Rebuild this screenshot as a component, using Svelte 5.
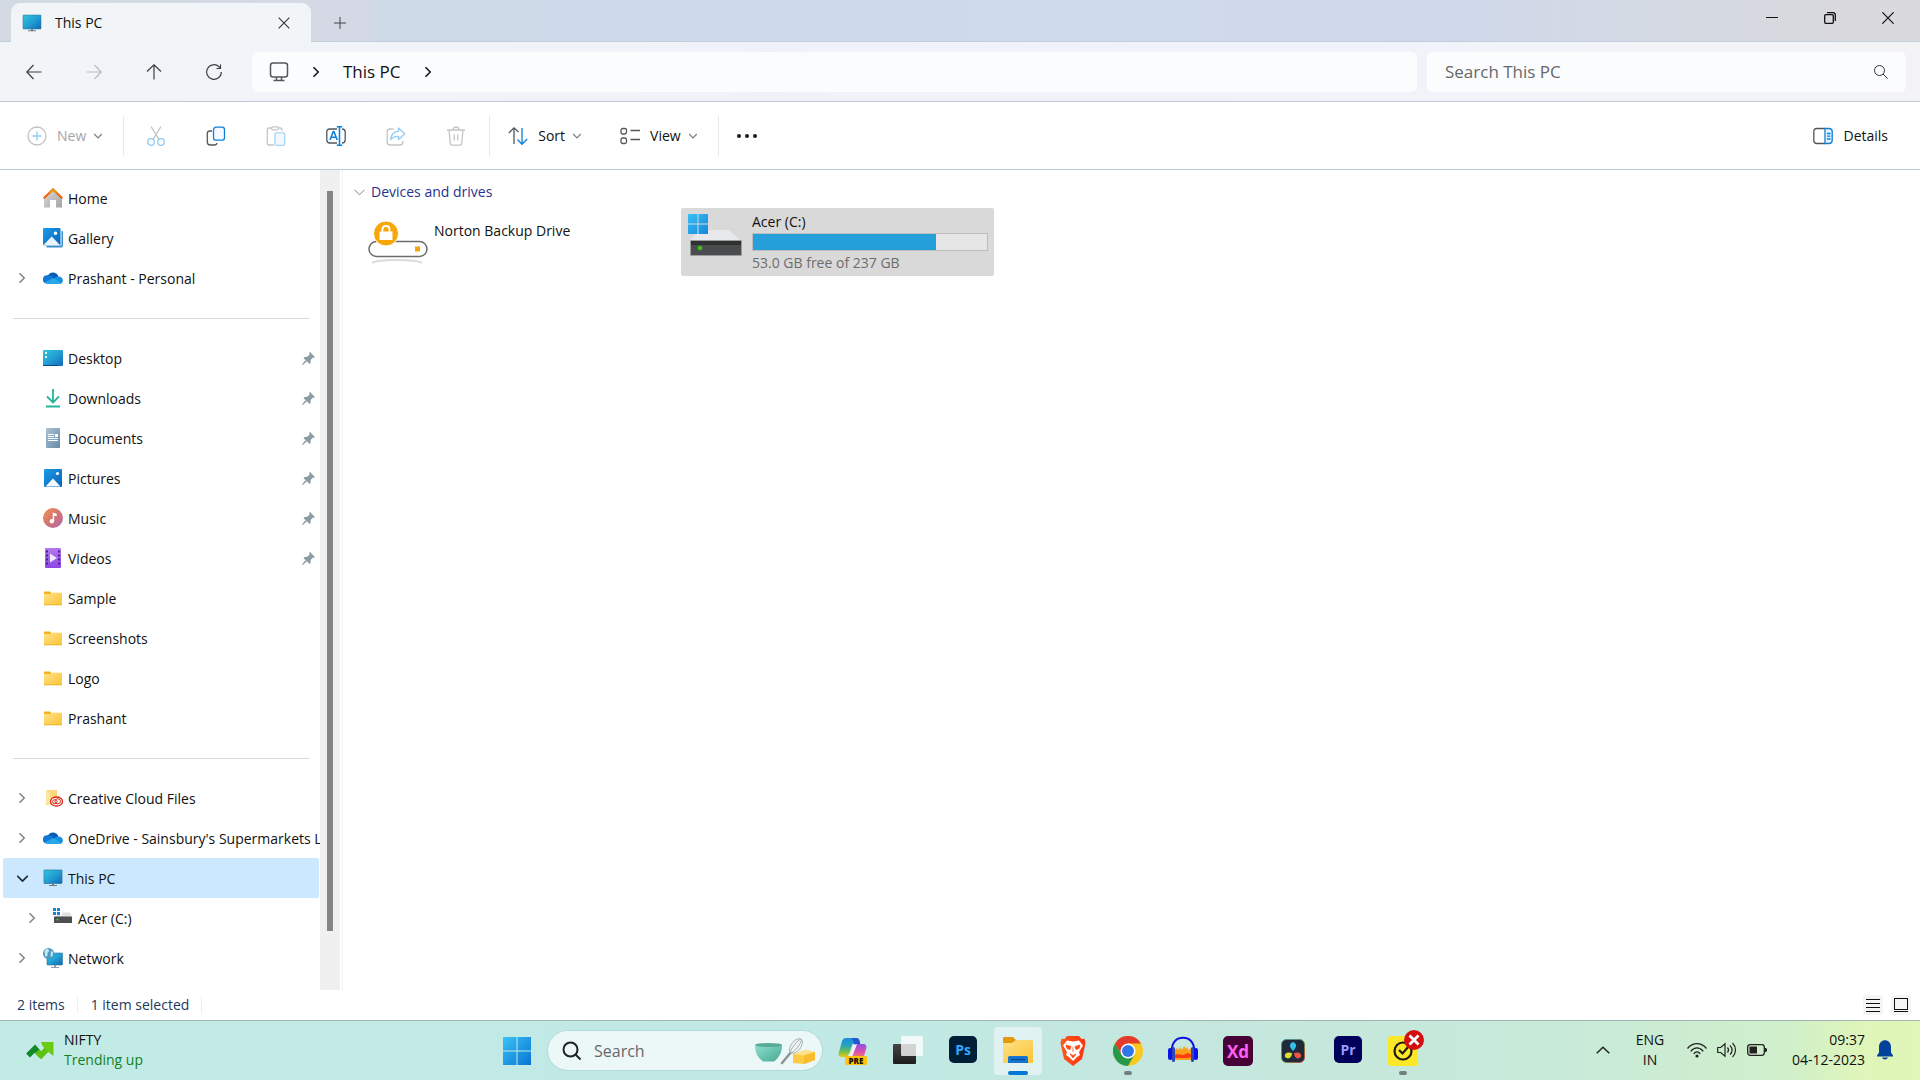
<script>
	const favourites = [
		{ label: 'Home', icon: 'home' },
		{ label: 'Gallery', icon: 'gallery' },
		{ label: 'Prashant - Personal', icon: 'onedrive', chevron: 'right' }
	];

	const pinned = [
		{ label: 'Desktop', icon: 'desktop', pin: true },
		{ label: 'Downloads', icon: 'downloads', pin: true },
		{ label: 'Documents', icon: 'documents', pin: true },
		{ label: 'Pictures', icon: 'pictures', pin: true },
		{ label: 'Music', icon: 'music', pin: true },
		{ label: 'Videos', icon: 'videos', pin: true },
		{ label: 'Sample', icon: 'folder' },
		{ label: 'Screenshots', icon: 'folder' },
		{ label: 'Logo', icon: 'folder' },
		{ label: 'Prashant', icon: 'folder' }
	];

	const locations = [
		{ label: 'Creative Cloud Files', icon: 'creative', chevron: 'right' },
		{ label: "OneDrive - Sainsbury's Supermarkets L", icon: 'onedrive', chevron: 'right' },
		{ label: 'This PC', icon: 'pc', chevron: 'down', selected: true },
		{ label: 'Acer (C:)', icon: 'drive', chevron: 'right', nested: true },
		{ label: 'Network', icon: 'network', chevron: 'right' }
	];

	const groups = [favourites, pinned, locations];

	const fileActions = [
		{ label: 'Cut', icon: 'cut' },
		{ label: 'Copy', icon: 'copy' },
		{ label: 'Paste', icon: 'paste' },
		{ label: 'Rename', icon: 'rename' },
		{ label: 'Share', icon: 'share' },
		{ label: 'Delete', icon: 'delete' }
	];

	const apps = [
		{ label: 'Copilot', icon: 'copilot' },
		{ label: 'Task view', icon: 'taskview' },
		{ label: 'Photoshop', icon: 'photoshop' },
		{ label: 'File Explorer', icon: 'explorer', state: 'active' },
		{ label: 'Brave', icon: 'brave' },
		{ label: 'Chrome', icon: 'chrome', state: 'running' },
		{ label: 'Audacity', icon: 'audacity' },
		{ label: 'Adobe XD', icon: 'xd' },
		{ label: 'DaVinci Resolve', icon: 'resolve' },
		{ label: 'Premiere Pro', icon: 'premiere' },
		{ label: 'Norton', icon: 'norton', state: 'running' }
	];

	const drive = { name: 'Acer (C:)', free: '53.0 GB', total: '237 GB', used: 78 };

	let search = $state('');
	let taskSearch = $state('');
</script>

{#snippet chevron(dir, size = 8)}
	<svg class="chevron {dir}" width={size} height={size} viewBox="0 0 8 8" fill="none" stroke="currentColor" stroke-width="1.2">
		<path d="M2 0.2 5.8 4 2 7.8" />
	</svg>
{/snippet}

<!-- 20px icons of the navigation tree -->
{#snippet treeIcon(name)}
	<svg class="tree-icon" width="20" height="20" viewBox="0 0 20 20">
		{#if name === 'home'}
			<path d="M1 9 10 1.500 19 9v10.500h-6V12H7v7.500H1z" fill="url(#grey)" />
			<path d="M.6 10.400 10 1.500l9.400 8.900" fill="none" stroke="#f2640f" stroke-width="2" />
			<path d="M6.600 4.700 10 1.500l3.400 3.200" fill="none" stroke="#e99a0c" stroke-width="2" />
		{:else if name === 'gallery'}
			<path d="M3 17.500h16.500v2H4zM18.500 2.500l1.500 1V18h-1.500z" fill="#3b8fca" />
			<rect width="17.500" height="17.500" rx="1" fill="url(#blue)" />
			<path d="m0 17.500 8.700-9 8.800 9z" fill="#e8f5ff" />
			<circle cx="12.500" cy="5.300" r="1.700" fill="#fff" />
		{:else if name === 'onedrive'}
			<path d="M5 7.500a5.600 5.600 0 0 1 10.400 1L12 12 4 10z" fill="#0a5cb5" />
			<path d="M4.200 7.300c2-.6 4 .2 6 1.700l-2 4-5.400 2.500A4.200 4.200 0 0 1 4.200 7.300z" fill="#0f78d4" />
			<path d="M15.200 8.500c6 .1 6.300 7.200 1 7.500l-6-4.500c1.300-2 3-3 5-3z" fill="#1690e0" />
			<path d="M1.800 14.600 10.300 10l8.300 5c-1 1-1.800 1-2.600 1H4.300c-1.200 0-2-.6-2.500-1.400z" fill="#28a8ea" />
		{:else if name === 'desktop'}
			<rect y="2" width="20" height="16" rx="1" fill="url(#screen)" />
			<path d="M2 4h2v2H2zM2 8h2v2H2z" fill="#e8fbff" />
			<path d="M0 17h15v1H0z" fill="#0c4a86" />
		{:else if name === 'downloads'}
			<path d="M10 1v13M4 8.500l6 6 6-6M3 18.500h14" fill="none" stroke="#24b39b" stroke-width="1.800" />
		{:else if name === 'documents'}
			<rect x="3" width="14" height="20" rx="1" fill="url(#paper)" />
			<path d="M5 6.500h6M5 8.500h6M5 10.500h10M5 12.500h10" stroke="#fff" stroke-width="1" />
			<rect x="12" y="6" width="3" height="3" fill="#fff" />
		{:else if name === 'pictures'}
			<rect x="1" y="1" width="18" height="18" rx="1" fill="url(#blue)" />
			<path d="m2.500 18.500 7.500-8 7.500 8z" fill="#f5faff" />
			<circle cx="14.500" cy="5.500" r="1.600" fill="#fff" />
		{:else if name === 'music'}
			<circle cx="10" cy="10" r="10" fill="url(#music)" />
			<circle cx="8.800" cy="13.200" r="2.200" fill="#fff" />
			<path d="M9.700 13V4.500l4 1.200v2.600l-2.500-.6V13z" fill="#fff" />
		{:else if name === 'videos'}
			<rect x="2" width="16" height="20" rx="1" fill="url(#violet)" />
			<path d="M4 2.500v16M16 2.500v16" stroke="#47218c" stroke-width="2" stroke-dasharray="2 2" />
			<path d="m7 5.500 7 4.500-7 4.500z" fill="#f0e8ff" />
		{:else if name === 'folder'}
			<path d="M1 3.500h6l1.500 1.500v3H1z" fill="#f5b01e" />
			<path d="M1 6h6l1.500-1.300H19V17H1z" fill="url(#folder)" />
			<path d="M1 16.300h18v1H1z" fill="#eeb22b" />
		{:else if name === 'creative'}
			<path d="M3 2h11v14l-11 1z" fill="#fbd879" />
			<path d="m3 2 4 2v13l-4-1.500z" fill="#fce6a4" />
			<ellipse cx="13.500" cy="13.500" rx="6" ry="4.500" fill="#fff" stroke="#db2a1c" stroke-width="1.300" />
			<ellipse cx="11.800" cy="13.700" rx="2.300" ry="2" fill="none" stroke="#db2a1c" />
			<ellipse cx="14.700" cy="13.300" rx="2.800" ry="2.500" fill="none" stroke="#db2a1c" />
		{:else if name === 'pc'}
			<rect x="1" y="2" width="18" height="13.500" rx=".5" fill="url(#screen)" stroke="#28769b" stroke-width=".7" />
			<path d="M9 15.500h2v1.500h3v1H6v-1h3z" fill="#6f7c86" />
		{:else if name === 'drive'}
			<path d="M9 4.500h8l2 4.500H2l2-1.500h5z" fill="#dfe1e3" />
			<path d="M0 0h3v3H0zM4 0h3v3H4zM0 4h3v3H0zM4 4h3v3H4z" fill="#1483d8" />
			<rect x="1" y="8.500" width="18" height="6.500" rx=".5" fill="#4d5052" />
			<circle cx="4.500" cy="11.500" r=".9" fill="#4bd530" />
		{:else if name === 'network'}
			<rect x="4" y="5" width="15.500" height="12" rx=".5" fill="url(#screen)" stroke="#28769b" stroke-width=".6" />
			<path d="M11 17h2v2h3v1H8v-1h3z" fill="#929ea6" />
			<circle cx="5.500" cy="5.500" r="5.500" fill="#4b9ac1" />
			<path d="M1.500 3c2-3 4-2 4.500-.5S4 4 4.500 6 3 9 2.200 8.500zM8 3l2 1-.5 4L7.500 9z" fill="#cde7f1" />
		{/if}
	</svg>
{/snippet}

{#snippet actionIcon(name)}
	<svg width="20" height="20" viewBox="0 0 20 20" fill="none" stroke-width="1.300" stroke="#54575a">
		{#if name === 'new'}
			<circle cx="10" cy="10" r="9" stroke="#bfc1c4" />
			<path d="M10 5.500v9M5.500 10h9" stroke="#91cdf3" />
		{:else if name === 'cut'}
			<path d="m5 .5 8 13M15 .5 7 13.500" stroke="#bfc1c4" />
			<circle cx="5" cy="16" r="3.300" stroke="#91cdf3" />
			<circle cx="15" cy="16" r="3.300" stroke="#91cdf3" />
		{:else if name === 'copy'}
			<path d="M6 5H4C2 5 1.300 6 1.300 7.500V16c0 2 1 3 3 3h4c1.500 0 2.500-.7 2.700-2" />
			<rect x="7.500" y="1.200" width="11" height="13" rx="2.500" fill="#f4faff" stroke="#0f80d7" />
		{:else if name === 'paste'}
			<path d="M5.500 2H3C2 2 1.300 2.700 1.300 4v13c0 1.300.7 2 1.700 2h5M12.500 2H14c1.300 0 2 .7 2 2v1" stroke="#c3c5c7" />
			<rect x="5.500" y=".8" width="7" height="3" rx="1.500" stroke="#c3c5c7" />
			<rect x="9" y="6.800" width="9.700" height="12.500" rx="1.500" fill="#f3faff" stroke="#a4d7f2" />
		{:else if name === 'rename'}
			<path d="M11 3H4C2 3 .8 4.200.8 6v8c0 1.800 1.200 3 3.200 3h7M16 3c2 0 3.200 1.200 3.200 3v8c0 1.800-1.200 3-3.200 3" />
			<path d="m4 14 3.300-8.500h.6L11.200 14M5 11.300h5.200" stroke="#0f80d7" stroke-width="1.600" />
			<path d="M13.500 1v18M10.800.7h5.400M10.800 19.300h5.400" stroke="#0f80d7" stroke-width="1.600" />
		{:else if name === 'share'}
			<path d="M7.500 3H4C2.200 3 1.200 4 1.200 5.700V16.300c0 1.700 1 2.700 2.800 2.700h10c1.800 0 2.800-1 2.800-2.700V15" stroke="#c3c5c7" />
			<path d="m12.500 2 6.300 5.800-6.300 5.700V10.300c-3.500-.2-5.700.7-7.800 3.200.5-5.200 3-8 7.800-8.300z" stroke="#91cdf3" stroke-linejoin="round" />
		{:else if name === 'delete'}
			<path d="M1 4h18M7 4c0-4 6-4 6 0M3 4l1.200 13c.1 1.500 1 2.200 2.300 2.200h7c1.300 0 2.200-.7 2.300-2.200L17 4M8.300 8.500v6M11.700 8.500v6" stroke="#c3c5c7" />
		{:else if name === 'sort'}
			<path d="M6 18V2M.8 7 6 1.800 10.500 6" />
			<path d="M14 2v16M9.500 13.500l4.500 4.700 5.200-5.200" stroke="#0f80d7" />
		{:else if name === 'view'}
			<rect x="1" y="2.500" width="5.500" height="5.500" rx="1.800" />
			<rect x="1" y="12" width="5.500" height="5.500" rx="1.800" />
			<path d="M10.500 4.500H20M10.500 13.500H20" />
		{:else if name === 'more'}
			<g fill="#1b1b1b" stroke="none">
				<circle cx="2" cy="10" r="2" /><circle cx="10" cy="10" r="2" /><circle cx="18" cy="10" r="2" />
			</g>
		{:else if name === 'details'}
			<path d="M12 2.500H4C2 2.500.8 3.700.8 5.500v9C.8 16.300 2 17.500 4 17.500h8" />
			<path d="M12 2.500h4c2 0 3.200 1.200 3.200 3v9c0 1.800-1.200 3-3.200 3h-4z" fill="#e4f3ff" stroke="#0f80d7" />
			<path d="M14 7.500h3.500M14 10.200h3.500M14 13h3.500" stroke="#0f80d7" />
		{/if}
	</svg>
{/snippet}

{#snippet appIcon(name)}
	<svg width="30" height="30" viewBox="0 0 30 30">
		{#if name === 'copilot'}
			<path d="M8 2h10c2 0 3 1 3.500 3l1 4-8-1-3 9-3 4H4c-3 0-4-2-3-5L4 5c.8-2 2-3 4-3z" fill="url(#copilotA)" />
			<path d="M14 2h4c2 0 3 1 3.500 3l1 4h-5c-2 0-2-7-5-7z" fill="#2455cf" />
			<path d="M18 8h7c3 0 4 2 3 5l-2 7c-1 2-2 3-4 3h-9l5-13c.3-1.300 0-2 0-2z" fill="url(#copilotB)" />
			<path d="m15 9 4-1-5 13-3-1z" fill="#f2edf2" />
			<rect x="7" y="20" width="22" height="9" rx="1.500" fill="#ffc20e" />
			<text x="18" y="27.500" class="badge-text" fill="#1b1300">PRE</text>
		{:else if name === 'taskview'}
			<rect y="8" width="23" height="20" rx="1" fill="url(#dark)" />
			<rect x="8" y="0" width="22" height="20" rx="1" fill="#fff" opacity=".78" />
		{:else if name === 'photoshop'}
			<rect x="1" width="28" height="27" rx="5" fill="#001e36" />
			<text x="15" y="19" class="adobe" fill="#31a8ff">Ps</text>
		{:else if name === 'explorer'}
			<path d="M0 2.500C0 1.500.6 1 1.500 1H10l3 3v8H0z" fill="#e39a0d" />
			<path d="M0 7h9l4-3h15.500c1 0 1.500.5 1.500 1.500V27H0z" fill="url(#folder)" />
			<path d="M5 27v-5.500C5 20.500 6 20 7 20h16c1 0 2 .5 2 1.500V27z" fill="#1576cf" />
			<path d="M8.500 23.500h13" stroke="#0a4f9b" stroke-width="1.500" stroke-linecap="round" />
		{:else if name === 'brave'}
			<path d="M9 0h12l2.500 3 3-.3L27.500 7l-.8 4L24 23l-9 7-9-7L3.300 11l-.8-4 1-4.300 3 .3z" fill="url(#brave)" />
			<path d="m9 4.500 6 1 6-1 4 5-4 6.500 1 3-3 2-4 4-4-4-3-2 1-3-4-6.500z" fill="#fff" />
			<path d="m8 9 5 1.500-1 3-3-1zM22 9l-5 1.500 1 3 3-1zM15 11v5M12 18l3 1.500 3-1.500-3 4z" fill="#fb4b16" stroke="#fb4b16" stroke-width=".8" />
		{:else if name === 'chrome'}
			<circle cx="15" cy="15" r="15" fill="#f9c81e" />
			<path d="M2 7.500A15 15 0 0 1 28 7.500H15L8.500 18.800z" fill="#e33b2e" />
			<path d="M2 7.500A15 15 0 0 0 15 30l6.500-11.200H8.500z" fill="#27994b" />
			<circle cx="15" cy="15" r="7.500" fill="#fff" />
			<circle cx="15" cy="15" r="6" fill="#3076ea" />
		{:else if name === 'audacity'}
			<path d="M6 24h18V14l-2-2-1 3-2-4-1 2-2-3-2 4-2-3-1 3-2-2-3 3z" fill="#f9a01b" />
			<path d="M6 19l4-1 5 1 5-2 4 2v2l-5 1H6z" fill="#ff3c12" />
			<path d="M4 16C3 7 8 1.800 15 1.800S27 7 26 16" fill="none" stroke="#0b12e6" stroke-width="2" />
			<rect y="12" width="4.500" height="12" rx="2.200" fill="#0b12e6" /><rect x="4" y="11" width="3" height="15" rx="1.500" fill="#2e46b8" />
			<rect x="25.500" y="12" width="4.500" height="12" rx="2.200" fill="#0b12e6" /><rect x="23" y="11" width="3" height="15" rx="1.500" fill="#2e46b8" />
		{:else if name === 'xd'}
			<rect width="30" height="30" rx="5" fill="#470137" />
			<text x="15" y="22" class="adobe large" fill="#ff61f6">Xd</text>
		{:else if name === 'resolve'}
			<rect x="3.500" y="3.500" width="23" height="23" rx="5" fill="#1e2a3a" stroke="url(#rim)" />
			<path d="M15 6c5 2 3 6 0 9-3-3-5-7 0-9z" fill="#37bde9" />
			<path d="M7 21c-1-5 4-5 7-4 0 5-4 7-7 4z" fill="#e0dc33" />
			<path d="M23 21c1-5-4-5-7-4 0 5 4 7 7 4z" fill="#ea5442" />
		{:else if name === 'premiere'}
			<rect x="1" width="28" height="27" rx="5" fill="#00005b" />
			<text x="15" y="19" class="adobe" fill="#9999ff">Pr</text>
		{:else if name === 'norton'}
			<rect width="30" height="30" rx="3" fill="#fde727" />
			<circle cx="15" cy="15" r="8.500" fill="none" stroke="#1c1b15" stroke-width="2.200" />
			<path d="m11 14 3.500 3.500L21 10" fill="none" stroke="#1c1b15" stroke-width="2.200" />
		{/if}
	</svg>
{/snippet}

<!-- shared gradients -->
<svg class="defs" width="0" height="0" aria-hidden="true">
	<defs>
		<linearGradient id="screen" x2="1" y2="1"><stop stop-color="#32c5dc" /><stop offset=".5" stop-color="#219fd3" /><stop offset="1" stop-color="#1267b8" /></linearGradient>
		<linearGradient id="blue" x2="1" y2="1"><stop stop-color="#1f9be8" /><stop offset="1" stop-color="#0563b8" /></linearGradient>
		<linearGradient id="grey" x2="1" y2="1"><stop stop-color="#dcdcdc" /><stop offset="1" stop-color="#a3a3a3" /></linearGradient>
		<linearGradient id="paper" x2="1" y2="1"><stop stop-color="#adc3d6" /><stop offset="1" stop-color="#6689a5" /></linearGradient>
		<linearGradient id="music" x2="1" y2="1"><stop stop-color="#f19457" /><stop offset=".5" stop-color="#d5736f" /><stop offset="1" stop-color="#ad69b5" /></linearGradient>
		<linearGradient id="violet" x2="0" y2="1"><stop stop-color="#b279ef" /><stop offset="1" stop-color="#8f45e4" /></linearGradient>
		<linearGradient id="folder" x2="1" y2="1"><stop stop-color="#ffe08a" /><stop offset="1" stop-color="#fbc634" /></linearGradient>
		<linearGradient id="logo" gradientUnits="userSpaceOnUse" x1="0" y1="0" x2="30" y2="30"><stop stop-color="#3cc5f6" /><stop offset="1" stop-color="#0671d2" /></linearGradient>
		<linearGradient id="dark" x2="0" y2="1"><stop stop-color="#454545" /><stop offset="1" stop-color="#1c1c1c" /></linearGradient>
		<linearGradient id="brave" x2="1" y2="0"><stop stop-color="#fb5a20" /><stop offset="1" stop-color="#fb330f" /></linearGradient>
		<linearGradient id="rim" x2="1" y2="1"><stop stop-color="#3c94b0" /><stop offset=".6" stop-color="#7b8b3c" /><stop offset="1" stop-color="#c93c3c" /></linearGradient>
		<linearGradient id="copilotA" x2="0" y2="1"><stop stop-color="#1a8fe0" /><stop offset=".4" stop-color="#25a3bb" /><stop offset=".75" stop-color="#7fc043" /><stop offset="1" stop-color="#f0c419" /></linearGradient>
		<linearGradient id="copilotB" x2="0" y2="1"><stop stop-color="#8d52df" /><stop offset=".5" stop-color="#d94fb5" /><stop offset="1" stop-color="#f78a4d" /></linearGradient>
		<linearGradient id="bowl" x2="1" y2="1"><stop stop-color="#8fe0cc" /><stop offset="1" stop-color="#45a893" /></linearGradient>
	</defs>
</svg>

<div class="screen">
	<header class="titlebar">
		<div class="tab">
			<svg width="20" height="20" viewBox="0 0 20 20">
				<rect x="1" y="2" width="18" height="14" rx=".5" fill="url(#screen)" stroke="#28769b" stroke-width=".5" />
				<path d="M9 16h2v1.300h3v1H6v-1h3z" fill="#6f7c86" />
			</svg>
			<span class="tab-title">This PC</span>
			<button class="plain tab-close" aria-label="Close tab">
				<svg width="12" height="12" viewBox="0 0 12 12" stroke="#333" stroke-width="1.100"><path d="m.7.7 10.600 10.600M11.300.7.7 11.300" /></svg>
			</button>
		</div>
		<button class="plain new-tab" aria-label="New tab">
			<svg width="12" height="12" viewBox="0 0 12 12" stroke="#444"><path d="M6 0v12M0 6h12" /></svg>
		</button>
		<div class="captions">
			<button class="plain" aria-label="Minimize">
				<svg width="12" height="12" viewBox="0 0 12 12" stroke="#111"><path d="M0 5.500h12" /></svg>
			</button>
			<button class="plain" aria-label="Restore">
				<svg width="12" height="12" viewBox="0 0 12 12" stroke="#111" stroke-width="1.300" fill="none">
					<rect x=".7" y="2.700" width="8.600" height="8.600" rx="1" /><path d="M3 .7h6c1.500 0 2.300.8 2.300 2.300v6" />
				</svg>
			</button>
			<button class="plain" aria-label="Close">
				<svg width="12" height="12" viewBox="0 0 12 12" stroke="#111" stroke-width="1.200"><path d="m.3.3 11.400 11.400M11.700.3.3 11.700" /></svg>
			</button>
		</div>
	</header>

	<div class="navbar">
		<div class="history">
			<button class="plain" aria-label="Back">
				<svg width="16" height="16" viewBox="0 0 16 16"><path d="M15.500 8H1M7.500 1 .8 8l6.700 7" /></svg>
			</button>
			<button class="plain disabled" aria-label="Forward" disabled>
				<svg width="16" height="16" viewBox="0 0 16 16"><path d="M.5 8H15M8.500 1l6.700 7-6.700 7" /></svg>
			</button>
			<button class="plain" aria-label="Up">
				<svg width="16" height="16" viewBox="0 0 16 16"><path d="M8 15.500V1M1 7.500 8 .8l7 6.700" /></svg>
			</button>
			<button class="plain" aria-label="Refresh">
				<svg width="16" height="16" viewBox="0 0 16 16"><path d="M15.300 8A7.300 7.300 0 1 1 13 2.700L14.500 4M14.500.5V4.500h-4" /></svg>
			</button>
		</div>
		<div class="address">
			<svg width="20" height="20" viewBox="0 0 20 20" fill="none" stroke="#54575a" stroke-width="1.500">
				<rect x="1.500" y="1" width="17" height="14" rx="2.500" /><path d="M7.500 15v3.500M12.500 15v3.500M4.500 18.500h11" />
			</svg>
			{@render chevron('right', 10)}
			<a class="crumb" href="#this-pc">This PC</a>
			{@render chevron('right', 10)}
		</div>
		<div class="search">
			<input type="text" placeholder="Search This PC" aria-label="Search This PC" bind:value={search} />
			<svg width="14" height="14" viewBox="0 0 14 14" fill="none" stroke="#333"><circle cx="5.500" cy="5.500" r="5" /><path d="m9 9 4.700 4.700" /></svg>
		</div>
	</div>

	<div class="toolbar">
		<button class="plain tool new" disabled>{@render actionIcon('new')}<span>New</span>{@render chevron('down')}</button>
		<span class="divider"></span>
		<div class="actions">
			{#each fileActions as action}
				<button class="plain" aria-label={action.label}>{@render actionIcon(action.icon)}</button>
			{/each}
		</div>
		<span class="divider"></span>
		<button class="plain tool">{@render actionIcon('sort')}<span>Sort</span>{@render chevron('down')}</button>
		<button class="plain tool">{@render actionIcon('view')}<span>View</span>{@render chevron('down')}</button>
		<span class="divider"></span>
		<button class="plain tool" aria-label="See more">{@render actionIcon('more')}</button>
		<button class="plain tool details">{@render actionIcon('details')}<span>Details</span></button>
	</div>

	<div class="body">
		<nav class="tree" aria-label="Locations">
			{#each groups as group}
				<ul>
					{#each group as item}
						<li class:selected={item.selected} class:nested={item.nested}>
							<span class="toggle-slot">
								{#if item.chevron}
									<button class="plain toggle {item.chevron}" aria-label="Toggle {item.label}">
										{@render chevron(item.chevron, item.chevron === 'down' ? 11 : 10)}
									</button>
								{/if}
							</span>
							<a href="#{item.icon}">
								{@render treeIcon(item.icon)}
								<span class="label">{item.label}</span>
							</a>
							{#if item.pin}
								<svg class="pin" width="13" height="13" viewBox="0 0 13 13" fill="#8f9ba3">
									<path d="M8 0 13 5l-.8.800-1.200-.2-2.300 2.300-.3 3L7.500 12 1.500 6l.8-1 3-.3L7.500 2.500 7.200.8zM3.500 8.300l1.200 1.200L.8 13 0 12.200z" />
								</svg>
							{/if}
						</li>
					{/each}
				</ul>
			{/each}
		</nav>
		<div class="scrollbar"><div class="thumb"></div></div>

		<main class="content">
			<h2>
				<svg width="11" height="7" viewBox="0 0 11 7" fill="none" stroke="#7b858c"><path d="m.5.8 5 5 5-5" /></svg>
				Devices and drives
			</h2>
			<div class="drives">
				<div class="drive norton">
					<svg width="62" height="54" viewBox="0 0 62 54">
						<path d="M4 51c6-4 44-4 50 0" fill="none" stroke="#d8dadc" stroke-width="2" />
						<rect x="1" y="29.500" width="58" height="15" rx="7.500" fill="#fff" stroke="#6c6c6c" stroke-width="1.500" />
						<rect x="47" y="34.500" width="5" height="5" fill="#f5a30a" />
						<circle cx="18" cy="21.500" r="12.500" fill="#f8a70b" stroke="#fff" />
						<path d="M11.500 19.500h13V28h-13z" fill="#fff" />
						<path d="M14.500 20.500V17c0-4 7-4 7 0v3.500" fill="none" stroke="#fff" stroke-width="1.800" />
					</svg>
					<span class="drive-name">Norton Backup Drive</span>
				</div>
				<div class="drive selected">
					<svg width="62" height="48" viewBox="0 0 62 48">
						<path d="m4 28 10-10h29l11 10z" fill="#e6e8ec" />
						<g fill="url(#logo)">
							<rect x="2" y="2" width="9.500" height="9.500" /><rect x="12.500" y="2" width="9.500" height="9.500" />
							<rect x="2" y="12.500" width="9.500" height="9.500" /><rect x="12.500" y="12.500" width="9.500" height="9.500" />
						</g>
						<rect x="4" y="28" width="52" height="16" rx="1" fill="#9b9c9d" />
						<rect x="5" y="29" width="50" height="14" fill="#4b4c4d" />
						<rect x="5" y="29" width="50" height="4" fill="#2f3030" />
						<circle cx="14" cy="36" r="2.300" fill="#37c31c" />
					</svg>
					<div class="drive-info">
						<span class="drive-name">{drive.name}</span>
						<div class="usage" role="progressbar" aria-label="Space used" aria-valuenow={drive.used}>
							<div class="used" style="width: {drive.used}%"></div>
						</div>
						<span class="free">{drive.free} free of {drive.total}</span>
					</div>
				</div>
			</div>
		</main>
	</div>

	<div class="status">
		<span class="count">2 items</span>
		<span class="count">1 item selected</span>
		<div class="view-modes">
			<button class="plain" aria-label="Details view">
				<svg width="14" height="14" viewBox="0 0 14 14" stroke="#111"><path d="M0 1.500h14M0 5.500h14M0 9.500h14M0 13.500h14" /></svg>
			</button>
			<button class="plain" aria-label="Large icons view">
				<svg width="14" height="14" viewBox="0 0 14 14" fill="none" stroke="#111"><rect x=".5" y=".5" width="13" height="11" /><path d="M0 13.500h14" /></svg>
			</button>
		</div>
	</div>

	<footer class="taskbar">
		<button class="plain widgets">
			<svg width="28" height="18" viewBox="0 0 28 18" fill="none" stroke-width="5.500">
				<path d="m2 14.500 7-7 6 7" stroke="#14892a" />
				<path d="m11 10.500 4 4L24 5" stroke="#5cc410" />
				<path d="M15 1h11.500c.8 0 1 .4 1 1v13l-4-3-7-7z" fill="#6acb12" stroke="none" />
			</svg>
			<span class="widget-text">NIFTY<span class="trend">Trending up</span></span>
		</button>

		<div class="apps">
			<button class="plain app" aria-label="Start">
				<svg width="30" height="30" viewBox="0 0 30 30" fill="url(#logo)">
					<path d="M1 1h13.500v13.500H1zM15.500 1H29v13.500H15.500zM1 15.500h13.500V29H1zM15.500 15.500H29V29H15.500z" />
				</svg>
			</button>
			<div class="task-search">
				<svg width="20" height="20" viewBox="0 0 20 20" fill="none" stroke="#222" stroke-width="2"><circle cx="8.500" cy="8.500" r="7" /><path d="m13.500 13.500 5 5" /></svg>
				<input type="text" placeholder="Search" aria-label="Search Windows" bind:value={taskSearch} />
				<svg width="62" height="28" viewBox="0 0 62 28">
					<path d="M1 8h27c0 9-4 13-8 16.500h-11C4 21 1 16 1 8z" fill="url(#bowl)" />
					<ellipse cx="14.500" cy="8" rx="13.500" ry="2" fill="#58ab98" />
					<path d="m28 26 10-12" stroke="#8d9498" stroke-width="2.500" stroke-linecap="round" />
					<g fill="#eef4f4" stroke="#9da6a8" stroke-width=".8">
						<ellipse cx="42" cy="9" rx="4.800" ry="8.500" transform="rotate(38 42 9)" />
						<ellipse cx="42" cy="9" rx="2" ry="8.500" transform="rotate(38 42 9)" />
					</g>
					<path d="m39 17 13-4 9 2v8l-11 4-11-1z" fill="#fdca45" />
					<path d="m39 17 13-4 9 2-11 3.500z" fill="#ffe28a" />
					<path d="m50 18.500 11-3.500v8l-11 4z" fill="#f8bc2c" />
				</svg>
			</div>
			{#each apps as app}
				<button class="plain app {app.state ?? ''}" aria-label={app.label}>
					{@render appIcon(app.icon)}
					{#if app.icon === 'norton'}
						<svg class="alert" width="20" height="20" viewBox="0 0 20 20">
							<circle cx="10" cy="10" r="10" fill="#d50f0f" /><path d="m5.500 5.500 9 9M14.500 5.500l-9 9" stroke="#fff" stroke-width="2.800" />
						</svg>
					{/if}
				</button>
			{/each}
		</div>

		<div class="tray">
			<button class="plain overflow" aria-label="Hidden icons">
				<svg width="14" height="8" viewBox="0 0 14 8" fill="none" stroke="#222" stroke-width="1.500"><path d="m.7 7.300 6.300-6 6.300 6" /></svg>
			</button>
			<button class="plain lang">ENG<br />IN</button>
			<button class="plain system" aria-label="Network, sound, battery">
				<svg width="20" height="16" viewBox="0 0 20 16" fill="none" stroke="#222" stroke-width="1.300">
					<path d="M.5 6.500c5.500-6.500 13.500-6.500 19 0M3.700 9.300c3.800-4.600 8.800-4.600 12.600 0M6.700 11.800c2.200-2.500 4.400-2.500 6.600 0" /><circle cx="10" cy="14" r="1.600" fill="#222" stroke="none" />
				</svg>
				<svg width="20" height="16" viewBox="0 0 20 16" fill="none" stroke="#222" stroke-width="1.200">
					<path d="M.7 5.500h3L8 1.800v12.400L3.700 10.500h-3zM10.500 5.500c1.300 1.500 1.300 3.500 0 5M13 3.300c2.500 2.800 2.500 6.600 0 9.400M15.500 1c4 4 4 10 0 14" />
				</svg>
				<svg width="20" height="16" viewBox="0 0 20 16">
					<rect x=".7" y="2.700" width="16.600" height="10.600" rx="2.500" fill="none" stroke="#222" stroke-width="1.300" /><rect x="2.500" y="4.500" width="7.500" height="7" fill="#222" /><path d="M17.500 6h1.500l1 1v2l-1 1h-1.500z" fill="#222" />
				</svg>
			</button>
			<button class="plain clock">09:37<br />04-12-2023</button>
			<button class="plain" aria-label="Notifications">
				<svg width="16" height="20" viewBox="0 0 16 20" fill="#04419a">
					<path d="M2 7c0-9 12-9 12 0v5.500l2 3V16.500H0v-1l2-3zM5 17.500h6c-.8 2.500-5.200 2.500-6 0z" />
				</svg>
			</button>
		</div>
	</footer>
</div>

<style>
	:global(body) {
		margin: 0;
		font-family: 'Open Sans', 'Noto Sans', sans-serif;
		font-size: 14px;
		line-height: 20px;
		color: #111;
	}

	.screen {
		display: flex;
		flex-direction: column;
		min-height: 100vh;
		background: #fff;
	}

	svg {
		display: block;
		flex: none;
	}

	.plain {
		display: flex;
		align-items: center;
		justify-content: center;
		padding: 0;
		border: none;
		background: none;
		font: inherit;
		color: inherit;
	}

	a {
		color: inherit;
		text-decoration: none;
	}

	input {
		flex: 1;
		min-width: 0;
		padding: 0;
		border: none;
		outline: none;
		background: none;
		font: inherit;
		color: inherit;
	}

	input::placeholder {
		color: #66686a;
		opacity: 1;
	}

	.chevron.down {
		transform: rotate(90deg);
	}

	/* Title bar */
	.titlebar {
		display: flex;
		align-items: flex-end;
		height: 42px;
		padding-left: 11px;
		background: linear-gradient(90deg, #d3dae3 0, #d4d9e5 19%, #cedae8 20%, #cfdaec 60%, #d0d9ea 76%, #d3dae5 84%, #d9d9de 96%);
		box-shadow: inset 0 -1px #c2cddb;
	}

	.tab {
		display: flex;
		align-items: center;
		width: 300px;
		height: 39px;
		box-sizing: border-box;
		padding: 0 21px 0 11px;
		border-radius: 9px 9px 0 0;
		background: #f1f5f8;
	}

	.tab-title {
		flex: 1;
		margin-left: 13px;
		font-weight: 500;
	}

	.new-tab {
		width: 58px;
		height: 38px;
	}

	.captions {
		display: flex;
		align-self: flex-start;
		margin-left: auto;
		padding-right: 3px;
	}

	.captions button {
		width: 58px;
		height: 36px;
	}

	/* Navigation bar */
	.navbar {
		display: flex;
		align-items: center;
		height: 59px;
		padding-right: 14px;
		border-bottom: 1px solid #bdc8d6;
		background: linear-gradient(90deg, #f1f5f8, #eff3f9 40%, #f0f3f9 75%, #f3f3f5);
		font-size: 17px;
	}

	.history {
		display: flex;
		padding: 0 8px 0 4px;
	}

	.history button {
		width: 60px;
		height: 40px;
	}

	.history svg {
		fill: none;
		stroke: #3c3f41;
		stroke-width: 1.2;
	}

	.history .disabled svg {
		stroke: #b7babd;
	}

	.address,
	.search {
		display: flex;
		align-items: center;
		height: 40px;
		box-sizing: border-box;
		border-radius: 6px;
		background: #fbfcfe;
	}

	.address {
		flex: 1;
		gap: 22px;
		padding-left: 17px;
	}

	.search {
		flex: 0 1 479px;
		margin-left: 10px;
		padding: 0 18px;
	}

	/* Command bar */
	.toolbar {
		display: flex;
		align-items: center;
		height: 67px;
		border-bottom: 1px solid #bdc8d6;
	}

	.tool {
		gap: 10px;
		height: 40px;
		padding: 0 21px 0 18px;
	}

	.tool .chevron {
		margin-left: -2px;
		color: #7c7f82;
	}

	.tool.new {
		padding: 0 21px 0 27px;
		color: #a3a5a7;
	}

	.divider {
		width: 1px;
		height: 40px;
		background: #e8eaec;
	}

	.actions {
		display: flex;
		padding: 0 3px 0 2px;
	}

	.actions button {
		width: 60px;
		height: 40px;
	}

	.details {
		margin-left: auto;
		padding-right: 32px;
	}

	/* Tree */
	.body {
		display: flex;
		flex: 1;
	}

	.tree {
		width: 320px;
		padding: 8px 0 12px;
	}

	ul {
		margin: 0;
		padding: 0;
		list-style: none;
	}

	ul + ul::before {
		content: '';
		display: block;
		height: 1px;
		margin: 20px 11px 19px 13px;
		background: #d6d8da;
	}

	li {
		display: flex;
		align-items: center;
		height: 40px;
		margin: 0 1px 0 3px;
		border-radius: 2px;
	}

	li.selected {
		background: #cce8ff;
	}

	li.nested {
		padding-left: 10px;
	}

	li a {
		display: flex;
		align-items: center;
		flex: 1;
		gap: 5px;
		min-width: 0;
	}

	.label {
		padding-top: 2px;
		white-space: nowrap;
	}

	.toggle-slot {
		width: 40px;
	}

	.toggle {
		width: 38px;
		height: 40px;
		color: #858585;
	}

	.toggle.down {
		color: #1c2a36;
	}

	.pin {
		margin-right: 4px;
	}

	.scrollbar {
		width: 20px;
		box-sizing: border-box;
		padding: 21px 7px 59px;
		background: #f0f0f0;
	}

	.thumb {
		height: 100%;
		background: #858585;
	}

	/* Drives */
	.content {
		flex: 1;
		margin-left: 2px;
		padding: 12px 20px 0;
		border-left: 1px solid #f1f3f5;
	}

	h2 {
		display: flex;
		align-items: center;
		gap: 6px;
		margin: 0 0 6px -9px;
		font-size: 14px;
		font-weight: 400;
		color: #1f3390;
	}

	.drives {
		display: flex;
		flex-wrap: wrap;
		gap: 5px;
	}

	.drive {
		display: flex;
		gap: 4px;
		width: 313px;
		height: 68px;
		box-sizing: border-box;
		padding: 4px 6px 0 5px;
		border-radius: 2px;
	}

	.drive.selected {
		background: #d9d9d9;
	}

	.norton .drive-name {
		margin-top: 9px;
	}

	.drive-info {
		display: flex;
		flex: 1;
		flex-direction: column;
	}

	.usage {
		height: 16px;
		margin: 1px 0 2px;
		border: 1px solid #bcbcbc;
		background: #e6e6e6;
	}

	.used {
		height: 100%;
		background: #26a0da;
	}

	.free {
		color: #6d6d6d;
	}

	/* Status bar */
	.status {
		display: flex;
		align-items: center;
		height: 30px;
		padding: 0 9px 0 17px;
		color: #1e395b;
	}

	.count {
		margin-right: 13px;
		padding-right: 12px;
		border-right: 1px solid #eceef0;
		line-height: 16px;
	}

	.view-modes {
		display: flex;
		gap: 8px;
		margin-left: auto;
	}

	.view-modes button {
		width: 20px;
		height: 20px;
		border-radius: 2px;
		background: #f3f5f7;
	}

	/* Taskbar */
	.taskbar {
		display: grid;
		grid-template-columns: 1fr auto 1fr;
		align-items: center;
		height: 59px;
		border-top: 1px solid #a0b6b2;
		background: linear-gradient(90deg, #c3ebe6 0, #c0e9e6 40%, #c5e7dd 65%, #c8ead8 82%, #d0efcb 93%, #dff5b9 97%, #e0f6b8);
	}

	.widgets {
		justify-self: start;
		gap: 10px;
		padding: 0 0 2px 26px;
		text-align: left;
	}

	.widget-text,
	.trend {
		display: block;
	}

	.trend {
		color: #12801c;
	}

	.apps {
		display: flex;
		align-items: center;
		gap: 7px;
	}

	.app {
		position: relative;
		width: 48px;
		height: 48px;
		border-radius: 4px;
	}

	.app.active {
		background: #e0f3f2;
	}

	.app.active::after,
	.app.running::after {
		content: '';
		position: absolute;
		bottom: 0;
		width: 8px;
		height: 4px;
		border-radius: 2px;
		background: #74807f;
	}

	.app.active::after {
		width: 20px;
		background: #0078d4;
	}

	.alert {
		position: absolute;
		top: 3px;
		right: 3px;
	}

	.adobe,
	.badge-text {
		font-family: 'Open Sans', sans-serif;
		font-size: 14px;
		font-weight: 700;
		text-anchor: middle;
	}

	.adobe.large {
		font-size: 17px;
	}

	.badge-text {
		font-size: 8px;
		font-weight: 800;
	}

	.task-search {
		display: flex;
		align-items: center;
		gap: 12px;
		width: 274px;
		height: 39px;
		box-sizing: border-box;
		padding: 0 6px 0 14px;
		border-radius: 20px;
		background: #ecf8f8;
		box-shadow: 0 0 0 1px #b3dcd9;
		font-size: 16px;
	}

	.tray {
		display: flex;
		align-items: center;
		justify-self: end;
		gap: 12px;
		padding: 0 27px 2px 0;
	}

	.overflow {
		margin-right: 3px;
	}

	.lang {
		width: 50px;
		text-align: center;
	}

	.system {
		gap: 10px;
	}

	.clock {
		display: block;
		width: 86px;
		text-align: right;
	}

	/* only carries the gradient definitions */
	.defs {
		position: absolute;
	}
</style>
